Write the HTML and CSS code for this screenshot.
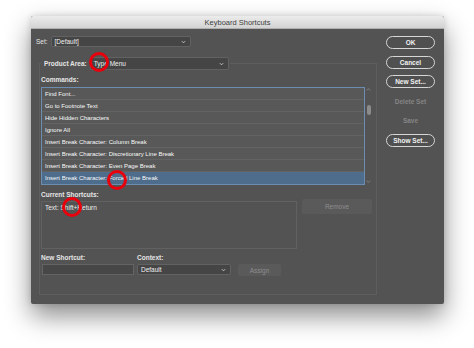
FILE: index.html
```html
<!DOCTYPE html>
<html lang="en">
<head>
  <meta charset="UTF-8">
  <title>Keyboard Shortcuts</title>
  <link rel="stylesheet" href="styles.css">
</head>
<body>

<div class="dialog">
  <div class="titlebar">Keyboard Shortcuts</div>

  <div class="content">
    <div class="main">
      <div class="set-row">
        <span class="label">Set:</span>
        <div class="dropdown set-dropdown">
          <span>[Default]</span>
          <svg class="chevron" viewBox="0 0 6 4"><path d="M1 1 L3 3 L5 1" /></svg>
        </div>
      </div>

      <fieldset class="group">
        <legend class="area">
          <span class="label bold">Product Area:</span>
          <div class="dropdown area-dropdown">
            <span>Type Menu</span>
            <svg class="chevron" viewBox="0 0 6 4"><path d="M1 1 L3 3 L5 1" /></svg>
          </div>
        </legend>

        <div class="label bold section">Commands:</div>
        <div class="commands">
          <ul class="command-list">
            <li>Find Font...</li>
            <li>Go to Footnote Text</li>
            <li>Hide Hidden Characters</li>
            <li>Ignore All</li>
            <li>Insert Break Character: Column Break</li>
            <li>Insert Break Character: Discretionary Line Break</li>
            <li>Insert Break Character: Even Page Break</li>
            <li class="selected">Insert Break Character: Forced Line Break</li>
          </ul>
          <div class="scrollbar">
            <svg class="arrow" viewBox="0 0 6 3"><path d="M1 2.5 L3 0.5 L5 2.5" /></svg>
            <span class="thumb"></span>
            <svg class="arrow arrow-down" viewBox="0 0 6 3"><path d="M1 0.5 L3 2.5 L5 0.5" /></svg>
          </div>
        </div>

        <div class="label bold section">Current Shortcuts:</div>
        <div class="current-row">
          <div class="shortcut-box">Text: Shift+Return</div>
          <button class="flat-btn remove-btn">Remove</button>
        </div>

        <div class="new-row">
          <div class="field">
            <div class="label bold">New Shortcut:</div>
            <div class="input shortcut-input"></div>
          </div>
          <div class="field">
            <div class="label bold">Context:</div>
            <div class="dropdown context-dropdown">
              <span>Default</span>
              <svg class="chevron" viewBox="0 0 6 4"><path d="M1 1 L3 3 L5 1" /></svg>
            </div>
          </div>
          <button class="flat-btn assign-btn">Assign</button>
        </div>
      </fieldset>
    </div>

    <div class="actions">
      <button class="btn">OK</button>
      <button class="btn">Cancel</button>
      <button class="btn">New Set...</button>
      <button class="btn disabled">Delete Set</button>
      <button class="btn disabled">Save</button>
      <button class="btn">Show Set...</button>
    </div>
  </div>

  <!-- red annotation rings -->
  <span class="ring ring-type"></span>
  <span class="ring ring-forced"></span>
  <span class="ring ring-shift"></span>
</div>

</body>
</html>
```

FILE: styles.css
```css
body {
  margin: 0;
  padding: 0;
  background-color: #ffffff;
  font-family: "Liberation Sans", Arial, sans-serif;
  width: 474px;
  height: 348px;
  overflow: hidden;
}

.dialog {
  position: relative;
  margin: 16px 0 0 31px;
  width: 413px;
  height: 288px;
  background-color: #535353;
  border-radius: 2px;
  box-shadow: 0 12px 26px rgba(0, 0, 0, 0.45), 0 0 6px rgba(0, 0, 0, 0.15);
}

.titlebar {
  height: 13px;
  line-height: 14px;
  text-align: center;
  font-size: 7.5px;
  color: #3e3e3e;
  background: linear-gradient(#ececec, #d2d2d2);
  border-bottom: 1px solid #b0b0b0;
  box-sizing: border-box;
  border-radius: 2px 2px 0 0;
}

.content {
  display: flex;
  padding: 7px 9px 0 5px;
}

.main {
  flex: 1;
}

.label {
  font-size: 6.5px;
  color: #e6e6e6;
  line-height: 10px;
}

.bold {
  font-weight: bold;
}

.set-row {
  display: flex;
  align-items: center;
  gap: 3px;
  height: 11px;
}

.dropdown {
  display: flex;
  align-items: center;
  justify-content: space-between;
  box-sizing: border-box;
  background-color: #454545;
  border: 1px solid #626262;
  border-radius: 2px;
  color: #f0f0f0;
  font-size: 6.5px;
  padding: 0 4px 0 3px;
}

.chevron {
  width: 5px;
  height: 4px;
  fill: none;
  stroke: #d8d8d8;
  stroke-width: 1;
}

.set-dropdown {
  width: 140px;
  height: 11px;
}

.group {
  margin: 10px 0 0 3px;
  width: 338px;
  box-sizing: border-box;
  padding: 0 4px 19px 1px;
  border: 1px solid #5e5e5e;
}

.area {
  display: flex;
  align-items: center;
  gap: 3px;
  padding: 0 1px 0 3px;
}

.area-dropdown {
  width: 139px;
  height: 13px;
}

.section {
  margin-top: 5px;
}

.commands {
  display: flex;
  margin-top: 2px;
}

.command-list {
  list-style: none;
  margin: 0;
  padding: 0;
  width: 324px;
  box-sizing: border-box;
  border: 1px solid #6d8db0;
  background-color: #585858;
}

.command-list li {
  height: 12px;
  line-height: 12px;
  box-sizing: border-box;
  border-bottom: 1px solid #636363;
  padding-left: 3px;
  font-size: 6px;
  color: #f8f8f8;
}

.command-list li.selected {
  background-color: #4e6c8b;
  border-bottom: none;
}

.scrollbar {
  width: 7px;
  display: flex;
  flex-direction: column;
  align-items: center;
  padding-top: 1px;
}

.arrow {
  width: 5px;
  height: 3px;
  fill: none;
  stroke: #9a9a9a;
  stroke-width: 0.8;
}

.arrow-down {
  margin-top: auto;
  margin-bottom: 2px;
}

.thumb {
  width: 4px;
  height: 10px;
  margin-top: 14px;
  border-radius: 2px;
  background-color: #8c8c8c;
}

.current-row {
  display: flex;
  align-items: flex-start;
}

.shortcut-box {
  width: 256px;
  height: 48px;
  box-sizing: border-box;
  margin-top: 1px;
  border: 1px solid #616161;
  padding: 2px 3px;
  font-size: 6.5px;
  line-height: 8px;
  color: #eeeeee;
}

.flat-btn {
  font-family: inherit;
  font-size: 6.5px;
  color: #8e8e8e;
  background-color: #5a5a5a;
  border: none;
  border-radius: 2px;
  padding: 0;
}

.remove-btn {
  width: 70px;
  height: 15px;
  margin-left: 5px;
  margin-top: -1px;
}

.new-row {
  display: flex;
  align-items: flex-end;
  margin-top: 4px;
}

.field {
  display: flex;
  flex-direction: column;
  margin-right: 3px;
}

.field .label {
  margin-bottom: 1px;
}

.input {
  box-sizing: border-box;
  height: 11px;
  background-color: #474747;
  border: 1px solid #646464;
}

.shortcut-input {
  width: 92px;
  margin-left: 1px;
}

.context-dropdown {
  width: 94px;
  height: 11px;
}

.assign-btn {
  width: 43px;
  height: 12px;
  margin-left: 4px;
  margin-bottom: -1px;
}

.actions {
  width: 49px;
  margin-left: 9px;
  display: flex;
  flex-direction: column;
  gap: 6.5px;
}

.btn {
  height: 13px;
  box-sizing: border-box;
  border: 1.5px solid #d6d6d6;
  border-radius: 7px;
  background-color: #505050;
  color: #f2f2f2;
  font-family: inherit;
  font-size: 6.5px;
  font-weight: bold;
  padding: 0;
}

.btn.disabled {
  border-color: transparent;
  background-color: transparent;
  color: #858585;
}

.ring {
  position: absolute;
  width: 20px;
  height: 20px;
  box-sizing: border-box;
  border: 3px solid #e8000c;
  border-radius: 50%;
}

.ring-type {
  left: 58px;
  top: 36px;
}

.ring-forced {
  left: 76px;
  top: 154px;
}

.ring-shift {
  left: 31px;
  top: 181px;
}
```
